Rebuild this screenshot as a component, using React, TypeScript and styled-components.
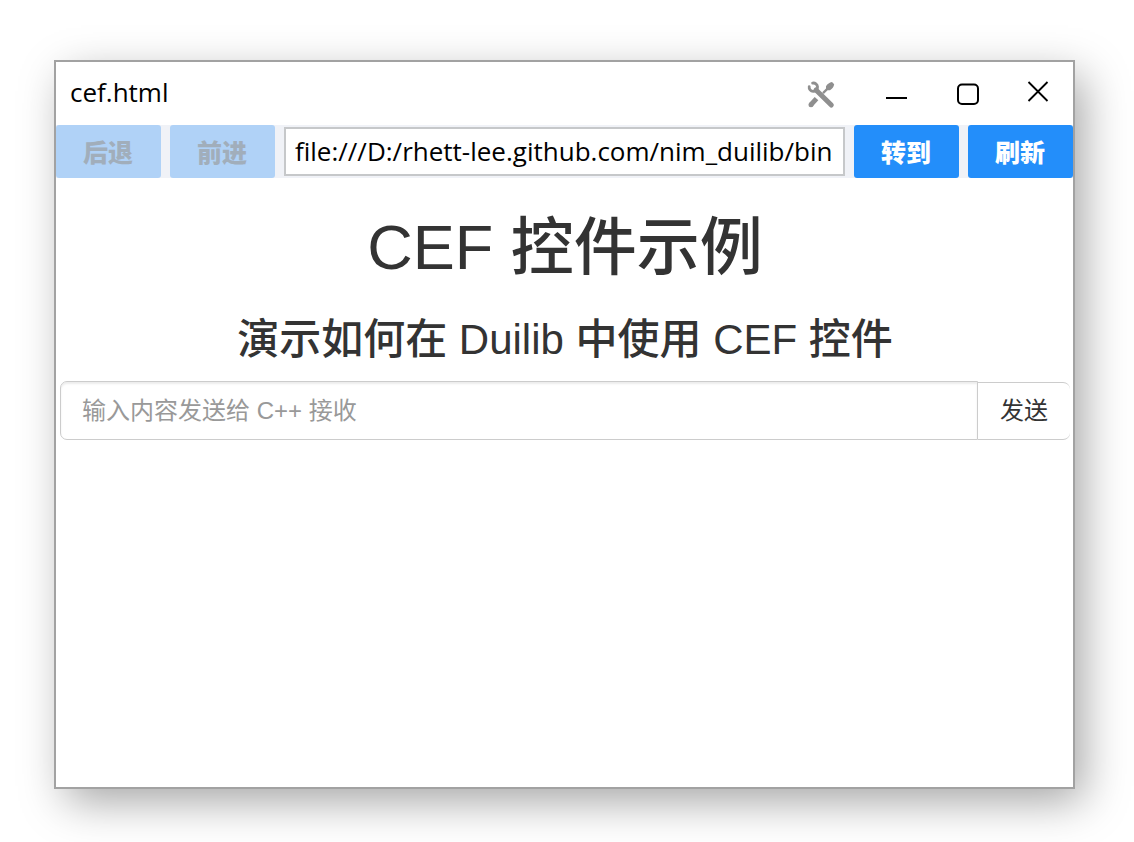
import React, { useState } from "react";
import styled, { createGlobalStyle, css } from "styled-components";

const GlobalStyle = createGlobalStyle`
  *, *::before, *::after { box-sizing: border-box; }
  body { margin: 0; background: #fff; }
`;

const uiFont = `"Open Sans", "Noto Sans CJK SC", sans-serif`;
const pageFont = `"Liberation Sans", "Noto Sans CJK SC", sans-serif`;

const Desktop = styled.div`
  min-height: 100vh;
  display: flex;
  padding: 60px 59px 53px 54px;
  overflow: hidden;
`;

const Window = styled.div`
  flex: 1;
  min-width: 0;
  display: flex;
  flex-direction: column;
  border: 2px solid #a2a2a2;
  background: #fff;
  box-shadow: 10px 14px 42px -2px rgba(0, 0, 0, 0.36);
`;

const TitleBar = styled.header`
  display: flex;
  align-items: center;
  height: 63px;
  padding: 0 14px;
  font: 26px/34px ${uiFont};
  color: #000;
`;

const Title = styled.span`
  flex: 1;
  padding-bottom: 3px;
`;

const Controls = styled.div`
  display: flex;
  align-items: center;
  gap: 32px;
`;

const IconButton = styled.button`
  display: block;
  width: 40px;
  height: 40px;
  padding: 0;
  border: 0;
  background: none;
  svg { display: block; }
`;

const Toolbar = styled.form`
  display: flex;
  align-items: center;
  gap: 9px;
  height: 53px;
  background: #f0f2f7;
`;

const NavButton = styled.button`
  flex: none;
  width: 105px;
  height: 53px;
  padding: 0 1px 2px 0;
  border: 0;
  border-radius: 3px;
  background: #238efa;
  color: #fff;
  font: 900 25px/34px "Noto Sans CJK SC", sans-serif;
  &:disabled {
    background: #b0d2f7;
    color: #a1aebb;
  }
`;

const Address = styled.input`
  flex: 1;
  min-width: 0;
  height: 49px;
  padding: 0 8px 2px 9px;
  border: 2px solid #c6c8ca;
  border-radius: 0;
  outline: 0;
  background: #fff;
  color: #000;
  font: 26px/34px ${uiFont};
`;

const Content = styled.main`
  flex: 1;
  padding: 0 3px 0 4px;
  font-family: ${pageFont};
  color: #333;
  text-align: center;
`;

const heading = css`
  margin: 0;
  font-weight: 500;
`;

const Heading = styled.h1`
  ${heading}
  padding-top: 34px;
  font-size: 63px;
  line-height: 70px;
`;

const SubHeading = styled.h3`
  ${heading}
  padding: 35px 0 18px;
  font-size: 42px;
  line-height: 46px;
`;

const MessageForm = styled.form`
  display: flex;
  align-items: flex-end;
`;

const fieldStyle = css`
  border: 1px solid #ccc;
  background: #fff;
  font: 24px/34px ${pageFont};
`;

const MessageInput = styled.input`
  ${fieldStyle}
  flex: 1;
  min-width: 0;
  height: 59px;
  padding: 0 21px;
  border-radius: 7px 0 0 7px;
  outline: 0;
  color: #555;
  box-shadow: inset 0 2px 2px rgba(0, 0, 0, 0.075);
  &::placeholder { color: #999; opacity: 1; }
`;

const SendButton = styled.button`
  ${fieldStyle}
  width: 92px;
  height: 58px;
  padding: 0;
  border-width: 1px 0 1px 0;
  border-radius: 0 7px 7px 0;
  color: #333;
`;

const ToolsIcon = () => (
  <svg width="40" height="40" viewBox="2 0 40 40" fill="none" stroke="#8f8f8f">
    <path d="M11.6 9.1A4.2 4.2 0 1 1 8.2 12.6" strokeWidth="2.8" strokeLinecap="round" />
    <path d="M15 16L30.3 31" strokeWidth="5" strokeLinecap="round" />
    <path d="M31 8L33.2 10.2C32.6 13 31.4 14.6 29 16.2L26.6 16.2L22.8 19.9L21.2 18.3L25 14.6L25 12.2C26.6 9.8 28.4 8.6 31 8Z" fill="#8f8f8f" stroke="none" />
    <path d="M15.5 24.6L10 30.6" strokeWidth="5" />
    <circle cx="10" cy="30.8" r="2.5" fill="#8f8f8f" stroke="none" />
  </svg>
);

const MinimizeIcon = () => (
  <svg width="40" height="40" viewBox="0 0 40 40" fill="none" stroke="#000" strokeWidth="2">
    <path d="M11 24H32" />
  </svg>
);

const MaximizeIcon = () => (
  <svg width="40" height="40" viewBox="0 0 40 40" fill="none" stroke="#000" strokeWidth="2">
    <rect x="11" y="10.5" width="20" height="19.5" rx="4" />
  </svg>
);

const CloseIcon = () => (
  <svg width="40" height="40" viewBox="0 0 40 40" fill="none" stroke="#000" strokeWidth="1.8">
    <path d="M9.5 8L28.5 27M28.5 8L9.5 27" />
  </svg>
);

export default function App() {
  const [url, setUrl] = useState("file:///D:/rhett-lee.github.com/nim_duilib/bin");
  const [message, setMessage] = useState("");
  const stay = (e: React.FormEvent) => e.preventDefault();

  return (
    <>
      <GlobalStyle />
      <Desktop>
        <Window>
          <TitleBar>
            <Title>cef.html</Title>
            <Controls>
              <IconButton type="button" aria-label="Developer tools"><ToolsIcon /></IconButton>
              <IconButton type="button" aria-label="Minimize"><MinimizeIcon /></IconButton>
              <IconButton type="button" aria-label="Maximize"><MaximizeIcon /></IconButton>
              <IconButton type="button" aria-label="Close"><CloseIcon /></IconButton>
            </Controls>
          </TitleBar>
          <Toolbar onSubmit={stay}>
            <NavButton type="button" disabled>后退</NavButton>
            <NavButton type="button" disabled>前进</NavButton>
            <Address aria-label="URL" value={url} onChange={(e) => setUrl(e.target.value)} />
            <NavButton type="submit">转到</NavButton>
            <NavButton type="button">刷新</NavButton>
          </Toolbar>
          <Content>
            <Heading>CEF 控件示例</Heading>
            <SubHeading>演示如何在 Duilib 中使用 CEF 控件</SubHeading>
            <MessageForm onSubmit={stay}>
              <MessageInput
                aria-label="输入内容发送给 C++ 接收"
                placeholder="输入内容发送给 C++ 接收"
                value={message}
                onChange={(e) => setMessage(e.target.value)}
              />
              <SendButton type="submit">发送</SendButton>
            </MessageForm>
          </Content>
        </Window>
      </Desktop>
    </>
  );
}
